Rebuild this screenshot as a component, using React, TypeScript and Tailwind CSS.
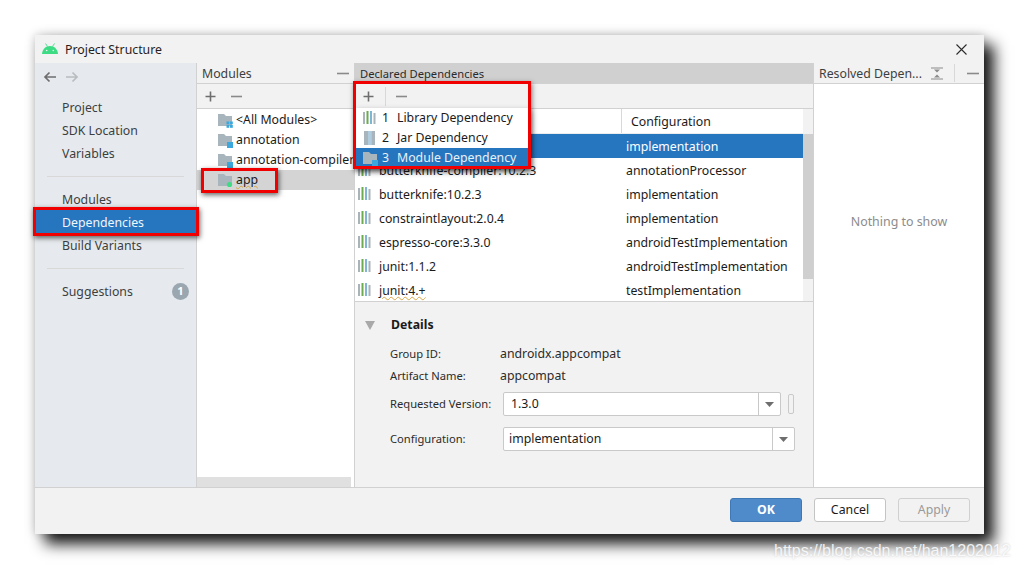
import React from "react";

const LibIcon = () => (
  <svg width="14" height="14" viewBox="0 0 14 14" className="shrink-0">
    <rect x="0" y="1" width="2" height="12" fill="#a8b3ba" />
    <rect x="3.5" y="0" width="2" height="13" fill="#6cab4f" />
    <rect x="7" y="0" width="2" height="13" fill="#7fb6d6" />
    <rect x="10.5" y="2" width="2" height="11" fill="#a8b3ba" />
  </svg>
);

const JarIcon = () => (
  <svg width="14" height="14" viewBox="0 0 14 14" className="shrink-0">
    <rect x="1" y="0" width="11" height="14" fill="#a9b5bc" />
    <rect x="5" y="0" width="3.500" height="14" fill="#e4ecf0" />
    <path d="M5 1h3.500M5 3h3.500M5 5h3.500M5 7h3.500M5 9h3.500M5 11h3.500M5 13h3.500" stroke="#6fa8c8" strokeWidth="0.900" />
  </svg>
);

const Folder = ({ kind }: { kind: "module" | "all" | "app" }) => (
  <svg width="15" height="15" viewBox="0 0 15 15" className="shrink-0">
    <path d="M0 1h6l2 2h6v10H0z" fill="#a9b5bc" />
    {kind === "module" && <rect x="9" y="9" width="6" height="6" fill="#3ba7dc" />}
    {kind === "all" && (
      <g fill="#3ba7dc">
        <rect x="8.5" y="8.5" width="2.8" height="2.8" />
        <rect x="12" y="8.5" width="2.8" height="2.8" />
        <rect x="8.5" y="12" width="2.8" height="2.8" />
        <rect x="12" y="12" width="2.8" height="2.8" />
      </g>
    )}
    {kind === "app" && <circle cx="11.5" cy="11.5" r="2.6" fill="#3ddc84" />}
  </svg>
);

const Android = () => (
  <svg width="16" height="12" viewBox="0 0 16 12" className="shrink-0">
    <path d="M0 11C0.3 6.5 3.5 3 8 3s7.700 3.500 8 8z" fill="#3ddc84" />
    <path d="M3.500 0.500l2 3M12.500 0.500l-2 3" stroke="#3ddc84" strokeWidth="0.9" />
    <circle cx="4.700" cy="7.500" r="0.800" fill="#f2f2f2" />
    <circle cx="11.300" cy="7.500" r="0.800" fill="#f2f2f2" />
  </svg>
);

const Plus = () => (
  <svg width="11" height="11" viewBox="0 0 11 11" className="shrink-0">
    <path d="M5.500 0.500v10M0.500 5.500h10" stroke="#6e6e6e" strokeWidth="1.600" />
  </svg>
);

const Minus = ({ w = 11 }: { w?: number }) => (
  <svg width={w} height="11" viewBox={`0 0 ${w} 11`} className="shrink-0">
    <path d={`M0 5.500h${w}`} stroke="#8a8a8a" strokeWidth="1.600" />
  </svg>
);

const Caret = () => (
  <svg width="9" height="5" viewBox="0 0 9 5"><path d="M0 0h9L4.500 5z" fill="#6e6e6e" /></svg>
);

const Nav = ({ label, active = false, low = false }: { label: string; active?: boolean; low?: boolean }) => (
  <div className={`h-[23px] pl-[27px] text-[12.3px] leading-[23px] ${low ? "pt-px" : ""} ${active ? "bg-[#2675bf] text-[#f2f6fa]" : "text-[#3c3f41]"}`}>
    {label}
  </div>
);

const rows: [string, string][] = [
  ["", "implementation"],
  ["butterknife-compiler:10.2.3", "annotationProcessor"],
  ["butterknife:10.2.3", "implementation"],
  ["constraintlayout:2.0.4", "implementation"],
  ["espresso-core:3.3.0", "androidTestImplementation"],
  ["junit:1.1.2", "androidTestImplementation"],
  ["junit:4.+", "testImplementation"],
];

const Select = ({ value, w, pad }: { value: string; w: string; pad: string }) => (
  <div className={`flex h-[24px] items-stretch rounded-[2px] border border-[#c9c9c9] bg-white ${w}`}>
    <div className={`flex-1 text-[12.3px] leading-[22px] text-[#1a1a1a] ${pad}`}>{value}</div>
    <div className="flex w-[22px] items-center justify-center border-l border-[#c9c9c9]"><Caret /></div>
  </div>
);

export default function App() {
  return (
    <div className="relative h-[569px] w-[1019px] overflow-hidden bg-white pl-[35px] pt-[35px] font-['Noto_Sans',sans-serif]">
      <div className="flex h-[499px] w-[949px] flex-col bg-[#f2f2f2] shadow-[10px_10px_14px_rgba(0,0,0,0.9),0_0_10px_rgba(0,0,0,0.22)]">
        {/* Title bar */}
        <div className="flex h-[28px] shrink-0 items-center pl-[7px] pr-[17px]">
          <Android />
          <span className="ml-[7px] pt-[2px] text-[12.3px] text-[#1f1f1f]">Project Structure</span>
          <svg width="11" height="11" viewBox="0 0 11 11" className="ml-auto">
            <path d="M0.500 0.500l10 10M10.500 0.500l-10 10" stroke="#2b2b2b" strokeWidth="1.100" />
          </svg>
        </div>

        <div className="flex min-h-0 flex-1">
          {/* Sidebar */}
          <div className="flex w-[162px] shrink-0 flex-col border-r border-[#d1d1d1] bg-[#e6eaee]">
            <div className="flex h-[27px] items-center gap-[8px] pl-[8px]">
              <svg width="14" height="12" viewBox="0 0 14 12"><path d="M13 6H2M6.500 1.500L2 6l4.500 4.500" stroke="#6e6e6e" strokeWidth="1.700" fill="none" /></svg>
              <svg width="14" height="12" viewBox="0 0 14 12"><path d="M1 6h11M7.500 1.500L12 6l-4.500 4.500" stroke="#b9bcbf" strokeWidth="1.700" fill="none" /></svg>
            </div>
            <div className="mt-[6px]">
              <Nav label="Project" />
              <Nav label="SDK Location" />
              <Nav label="Variables" />
            </div>
            <div className="mx-[12px] mb-[10px] mt-[11px] h-px bg-[#d8d8d8]" />
            <Nav low label="Modules" />
            <Nav low active label="Dependencies" />
            <Nav low label="Build Variants" />
            <div className="mx-[12px] mb-[11px] mt-[12px] h-px bg-[#d8d8d8]" />
            <div className="flex h-[23px] items-center pl-[27px] pr-[7px] text-[12.3px] text-[#3c3f41]">
              <span className="pt-[2px]">Suggestions</span>
              <span className="ml-auto flex h-[17px] w-[17px] items-center justify-center rounded-full bg-[#9aa7b0] text-[11px] font-bold text-white">1</span>
            </div>
          </div>

          {/* Modules */}
          <div className="flex w-[158px] shrink-0 flex-col border-r border-[#d1d1d1] bg-white">
            <div className="flex h-[21px] shrink-0 items-center justify-between border-b border-[#d1d1d1] bg-[#f2f2f2] pl-[5px] pr-[5px] text-[12.3px] text-[#3c3f41]">
              <span className="pt-[2px]">Modules</span>
              <Minus w={12} />
            </div>
            <div className="flex h-[25px] shrink-0 items-center gap-[15px] border-b border-[#d1d1d1] bg-[#f2f2f2] pl-[8px]">
              <Plus />
              <Minus />
            </div>
            <div className="min-h-0 flex-1 overflow-hidden pt-px">
              {[
                ["<All Modules>", "all"],
                ["annotation", "module"],
                ["annotation-compiler", "module"],
                ["app", "app"],
              ].map(([t, k]) => (
                <div key={t} className={`flex h-[20px] items-center gap-[3px] pl-[21px] text-[12.3px] whitespace-nowrap text-[#1a1a1a] ${k === "app" ? "bg-[#d4d4d4]" : ""}`}>
                  <Folder kind={k as "all" | "module" | "app"} />
                  <span className={k === "app" ? "underline decoration-wavy decoration-[#d9a441] decoration-1" : ""}>{t}</span>
                </div>
              ))}
            </div>
            <div className="h-[10px] w-[154px] shrink-0 bg-[#e0e0e0]" />
          </div>

          {/* Declared */}
          <div className="flex w-[459px] shrink-0 flex-col border-r border-[#d1d1d1]">
            <div className="flex h-[21px] shrink-0 items-center border-b border-[#d1d1d1] bg-[#d0d0d0] pl-[5px] pt-[2px] text-[11.2px] text-[#2b2b2b]">Declared Dependencies</div>
            <div className="flex h-[25px] shrink-0 items-center border-b border-[#d1d1d1] pl-[8px]">
              <Plus />
              <div className="ml-[11px] h-[19px] w-px bg-[#d8d8d8]" />
              <div className="ml-[10px]"><Minus /></div>
            </div>
            <div className="flex h-[193px] shrink-0 border-b border-[#d1d1d1]">
              <div className="min-w-0 flex-1 bg-white">
                <div className="flex h-[25px] border-b border-[#ececec]">
                  <div className="w-[267px] border-r border-[#d8d8d8]" />
                  <div className="pl-[9px] text-[12.3px] leading-[25px] text-[#1a1a1a]">Configuration</div>
                </div>
                {rows.map(([n, c], i) => (
                  <div key={c + i} className={`flex h-[24px] items-center text-[12.3px] ${i === 0 ? "bg-[#2675bf] text-white" : "text-[#1a1a1a]"}`}>
                    <div className="flex w-[271px] items-center gap-[7px] pl-[3px]">
                      <LibIcon />
                      <span className={`pt-[2px] ${n === "junit:4.+" ? "underline decoration-wavy decoration-[#d9a441] decoration-1" : ""}`}>{n}</span>
                    </div>
                    <span className="pt-[2px]">{c}</span>
                  </div>
                ))}
              </div>
              <div className="flex w-[10px] shrink-0 flex-col">
                <div className="h-[25px] bg-[#f2f2f2]" />
                <div className="h-[145px] bg-[#cfcfcf]" />
                <div className="flex-1 bg-[#f2f2f2]" />
              </div>
            </div>

            {/* Details */}
            <div className="min-h-0 flex-1 text-[11.2px] text-[#2b2b2b]">
              <div className="flex h-[41px] items-center pl-[10px] pt-[5px]">
                <svg width="10" height="9" viewBox="0 0 10 9"><path d="M0 0h10L5 9z" fill="#a9a9a9" /></svg>
                <span className="ml-[16px] pt-px text-[12.3px] font-bold text-[#1a1a1a]">Details</span>
              </div>
              <div className="flex h-[22px] items-center pl-[35px]">
                <span className="w-[110px]">Group ID:</span>
                <span className="text-[12.3px]">androidx.appcompat</span>
              </div>
              <div className="flex h-[22px] items-center pl-[35px]">
                <span className="w-[110px]">Artifact Name:</span>
                <span className="text-[12.3px]">appcompat</span>
              </div>
              <div className="mt-[5px] flex h-[24px] items-center pl-[35px]">
                <span className="w-[113px] whitespace-nowrap">Requested Version:</span>
                <Select value="1.3.0" w="w-[278px]" pad="pl-[7px]" />
                <div className="ml-[7px] h-[20px] w-[6px] rounded-[2px] border border-[#c9c9c9]" />
              </div>
              <div className="mt-[11px] flex h-[24px] items-center pl-[35px]">
                <span className="w-[113px]">Configuration:</span>
                <Select value="implementation" w="w-[292px]" pad="pl-[5px]" />
              </div>
            </div>
          </div>

          {/* Resolved */}
          <div className="flex min-w-0 flex-1 flex-col bg-white">
            <div className="flex h-[21px] shrink-0 items-center border-b border-[#d1d1d1] bg-[#f2f2f2] pl-[5px] text-[12.3px] text-[#3c3f41]">
              <span className="whitespace-nowrap pt-[2px]">Resolved Depen...</span>
              <svg width="12" height="13" viewBox="0 0 12 13" className="ml-[9px] shrink-0">
                <path d="M0 1h12M0 12h12" stroke="#8a8a8a" />
                <path d="M3 2.500h6L6 5.500zM3 10.500h6L6 7.500z" fill="#8a8a8a" />
              </svg>
              <div className="ml-[11px] h-[18px] w-px bg-[#d8d8d8]" />
              <div className="ml-[12px]"><Minus w={12} /></div>
            </div>
            <div className="flex-1 pt-[129px] text-center text-[12.4px] text-[#8c8c8c]">Nothing to show</div>
          </div>
        </div>

        {/* Footer */}
        <div className="flex h-[47px] shrink-0 items-center justify-end gap-[12px] border-t border-[#d1d1d1] pb-[2px] pr-[14px]">
          <button className="h-[24px] w-[72px] rounded-[3px] border border-[#3f78b5] bg-[#4f8bcb] text-[12.3px] font-bold text-white">OK</button>
          <button className="h-[24px] w-[72px] rounded-[3px] border border-[#c4c4c4] bg-white text-[12.3px] text-[#1a1a1a]">Cancel</button>
          <button className="h-[24px] w-[72px] rounded-[3px] border border-[#d0d0d0] bg-[#f2f2f2] text-[12.3px] text-[#9a9a9a]">Apply</button>
        </div>
      </div>

      {/* Popup menu */}
      <div className="absolute left-[355px] top-[108px] w-[174px] bg-white text-[12.3px] text-[#1a1a1a] shadow-[2px_3px_6px_rgba(0,0,0,0.45)]">
        <div className="flex h-[20px] items-center pl-[8px]"><LibIcon /><span className="ml-[5px] w-[15px]">1</span>Library Dependency</div>
        <div className="flex h-[20px] items-center pl-[8px]"><JarIcon /><span className="ml-[5px] w-[15px]">2</span>Jar Dependency</div>
        <div className="flex h-[20px] items-center bg-[#2675bf] pl-[8px] text-[#e9f1f8]"><Folder kind="module" /><span className="ml-[4px] w-[15px]">3</span>Module Dependency</div>
      </div>

      {/* Annotation boxes */}
      <div className="absolute left-[33px] top-[207px] h-[29px] w-[166px] border-[3px] border-[#f00000] shadow-[1px_2px_5px_rgba(0,0,0,0.6)]" />
      <div className="absolute left-[201px] top-[168px] h-[25px] w-[77px] border-[3px] border-[#f00000] shadow-[1px_2px_5px_rgba(0,0,0,0.6)]" />
      <div className="absolute left-[353px] top-[81px] h-[88px] w-[178px] border-[3px] border-[#f00000] shadow-[1px_2px_5px_rgba(0,0,0,0.5)]" />

      {/* Watermark */}
      <div className="absolute left-[774px] top-[539px] font-['Liberation_Sans',sans-serif] text-[16px] text-white/85 [text-shadow:0_0_2px_rgba(150,150,150,0.5)]">
        https://blog.csdn.net/han1202012
      </div>
    </div>
  );
}
